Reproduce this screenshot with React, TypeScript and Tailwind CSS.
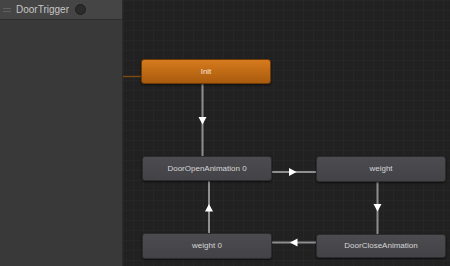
const nodes = [
  { label: "Init", x: 18, y: 59, h: 25, orange: true },
  { label: "DoorOpenAnimation 0", x: 19, y: 156, h: 25 },
  { label: "weight", x: 193, y: 156, h: 26 },
  { label: "DoorCloseAnimation", x: 193, y: 234, h: 24 },
  { label: "weight 0", x: 19, y: 233, h: 26 },
];

function Edges() {
  return (
    <svg className="absolute inset-0 h-full w-full" width="327" height="266">
      <line x1="0" y1="76.5" x2="18" y2="76.5" stroke="#7a4810" strokeWidth="1.5" />
      <g stroke="#8e8e8e" strokeWidth="2">
        <line x1="79.5" y1="84" x2="79.5" y2="156" />
        <line x1="148" y1="172" x2="193" y2="172" />
        <line x1="254.5" y1="182" x2="254.5" y2="234" />
        <line x1="193" y1="242.5" x2="148" y2="242.5" />
        <line x1="86" y1="233" x2="86" y2="181" />
      </g>
      <g fill="#ffffff">
        <polygon points="75.5,117 83.5,117 79.5,124.5" />
        <polygon points="166,168 166,176 173.5,172" />
        <polygon points="250.5,204 258.5,204 254.5,211.5" />
        <polygon points="174.5,238.5 174.5,246.5 167,242.5" />
        <polygon points="82,211.5 90,211.5 86,204" />
      </g>
    </svg>
  );
}

export default function App() {
  return (
    <div className="flex h-[266px] w-[450px] overflow-hidden bg-[#202020] font-['Liberation_Sans',Arial,sans-serif]">
      <aside className="flex w-[123px] shrink-0 flex-col border-r border-[#2a2a2a] bg-[#393939]">
        <div className="flex h-[20px] items-center border-b border-[#2e2e2e] bg-[#454545] pl-[3px]">
          <div className="flex w-[8px] flex-col gap-[2px] opacity-40">
            <span className="h-px bg-[#8a8a8a]" />
            <span className="h-px bg-[#8a8a8a]" />
          </div>
          <span className="ml-[5px] text-[10px] leading-none text-[#c6c6c6]">DoorTrigger</span>
          <span className="ml-[6px] h-[11px] w-[11px] rounded-full border border-[#1f1f1f] bg-[#2b2b2b]" />
        </div>
        <div className="flex-1" />
      </aside>
      <main className="relative flex-1 bg-[#212121] bg-[linear-gradient(to_right,#262626_1px,transparent_1px),linear-gradient(to_bottom,#262626_1px,transparent_1px)] bg-[size:10px_10px]">
        <Edges />
        {nodes.map((n) => (
          <div
            key={n.label}
            className={
              n.orange
                ? "absolute flex w-[130px] items-center justify-center rounded-[3px] border border-[#6e3c08] bg-[linear-gradient(to_bottom,#d67a1e,#a95b0d)] text-[8px] text-[#f6e8d8] shadow-[0_1px_2px_rgba(0,0,0,0.6)]"
                : "absolute flex w-[130px] items-center justify-center rounded-[3px] border border-[#2c2c2e] bg-[linear-gradient(to_bottom,#4c4c50,#434347)] text-[8px] text-[#d6d6d6] shadow-[0_1px_2px_rgba(0,0,0,0.6)]"
            }
            style={{ left: n.x, top: n.y, height: n.h }}
          >
            {n.label}
          </div>
        ))}
      </main>
    </div>
  );
}
